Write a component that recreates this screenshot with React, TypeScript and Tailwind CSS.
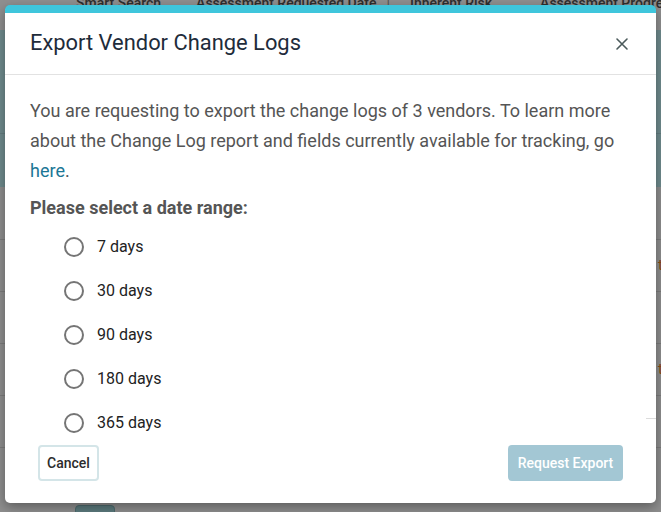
import React from "react";

const options = ["7 days", "30 days", "90 days", "180 days", "365 days"];

function Background() {
  return (
    <div className="absolute inset-0 flex flex-col bg-[#8e8e8e]">
      <div className="h-[30px] bg-[#8f8f8f] relative">
        <div className="absolute top-[-7px] left-0 right-0 flex text-[14px] font-medium text-[#2e2e2e] whitespace-nowrap">
          <span className="ml-[76px]">Smart Search</span>
          <span className="ml-[35px]">Assessment Requested Date</span>
          <span className="ml-[10px] text-[#555]">|</span>
          <span className="ml-[20px]">Inherent Risk</span>
          <span className="ml-[48px]">Assessment Progress</span>
        </div>
      </div>
      <div className="h-[104px] bg-[#6f8b8d] border-b border-[#647d80]" />
      <div className="h-[53px] bg-[#6f8b8d]" />
      <div className="h-[53px] border-b border-[#7c7c7c]" />
      <div className="h-[52px] border-b border-[#7c7c7c] flex justify-end items-center">
        <span className="text-[#8a4a14] text-[15px] mr-[-2px]">t</span>
      </div>
      <div className="h-[52px] border-b border-[#7c7c7c]" />
      <div className="h-[52px] border-b border-[#7c7c7c] flex justify-end items-center">
        <span className="text-[#8a4a14] text-[15px] mr-[-2px]">t</span>
      </div>
      <div className="h-[52px] border-b border-[#7c7c7c]" />
      <div className="flex-1 relative">
        <div className="absolute left-[75px] top-[57px] w-[40px] h-[12px] rounded-t-[4px] bg-[#5b7a7d] border border-[#4d6a6d]" />
      </div>
    </div>
  );
}

export default function App() {
  return (
    <div
      className="relative w-[661px] h-[512px] overflow-hidden"
      style={{ fontFamily: "Roboto, 'Liberation Sans', sans-serif" }}
    >
      <Background />
      <div className="absolute left-[5px] top-[5px] w-[651px] h-[498px] bg-white rounded-[5px] border-t-[8px] border-[#3fc6dc] shadow-[0_4px_12px_rgba(0,0,0,0.35)] flex flex-col">
        <div className="h-[62px] flex items-center justify-between pl-[25px] pr-[27px] border-b border-[#e2e2e2]">
          <h2 className="text-[21.9px] text-[#1e2c3b] font-normal">Export Vendor Change Logs</h2>
          <svg width="14" height="14" viewBox="0 0 14 14" className="text-[#4b5a5b]">
            <path d="M2 2 L12 12 M12 2 L2 12" stroke="currentColor" strokeWidth="1.6" strokeLinecap="round" />
          </svg>
        </div>
        <div className="flex-1 pt-[21px] pl-[25px] pr-[20px] relative">
          <p className="text-[18px] leading-[30px] text-[#555555]">
            You are requesting to export the change logs of 3 vendors. To learn more about the Change Log report and fields currently available for tracking, go{" "}
            <span className="text-[#1b7796]">here</span>.
          </p>
          <p className="mt-[10px] text-[18px] leading-[24px] font-bold text-[#555555]">Please select a date range:</p>
          <div className="mt-[5px] flex flex-col pl-[34px]">
            {options.map((o) => (
              <label key={o} className="h-[44px] flex items-center gap-[13px]">
                <span className="w-[20px] h-[20px] rounded-full border-2 border-[#757575]" />
                <span className="text-[16px] text-[#222]">{o}</span>
              </label>
            ))}
          </div>
          <div className="absolute right-0 top-[343px] w-[10px] h-px bg-[#dcdcdc]" />
        </div>
        <div className="flex justify-between items-center px-[33px] pb-[22px]">
          <button className="w-[61px] h-[36px] rounded-[4px] border-2 border-[#d4e5e8] bg-white text-[14px] font-medium text-[#2c2c2c]">
            Cancel
          </button>
          <button className="w-[115px] h-[36px] rounded-[4px] bg-[#a3c7d4] text-[14px] font-medium text-white">
            Request Export
          </button>
        </div>
      </div>
    </div>
  );
}
